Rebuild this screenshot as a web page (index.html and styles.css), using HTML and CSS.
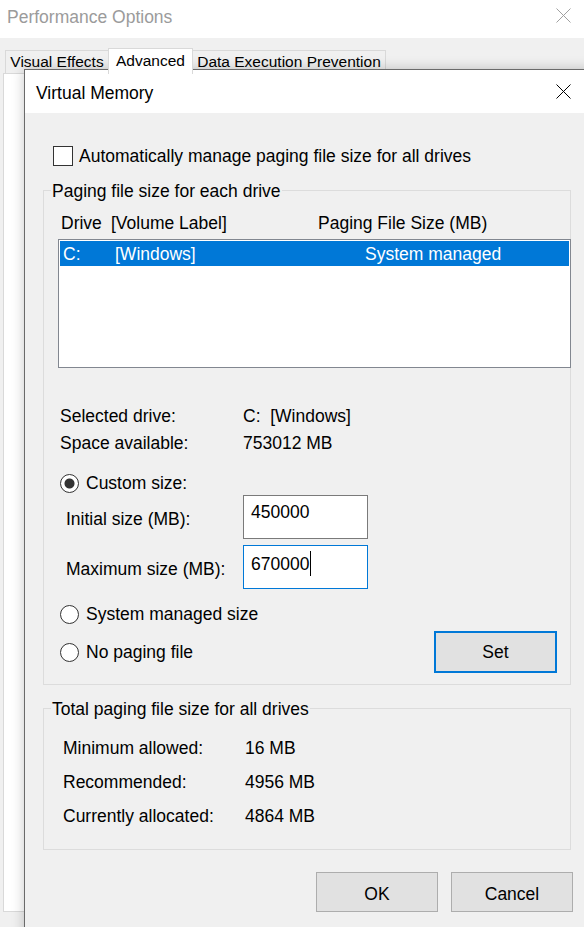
FILE: index.html
```html
<!DOCTYPE html>
<html lang="en">
<head>
<meta charset="utf-8">
<title>Virtual Memory</title>
<link rel="stylesheet" href="styles.css">
</head>
<body>
<div class="perf">
  <div class="perf-titlebar">
    <span class="perf-title">Performance Options</span>
    <svg class="close close-gray" width="15" height="15" viewBox="0 0 15 15"><path d="M0.5 0.5 L14.5 14.5 M14.5 0.5 L0.5 14.5" /></svg>
  </div>
  <div class="tabs">
    <div class="tab tab-ve">Visual Effects</div>
    <div class="tab tab-adv active">Advanced</div>
    <div class="tab tab-dep">Data Execution Prevention</div>
  </div>
  <div class="panel"></div>
</div>

<div class="dialog">
  <div class="dlg-titlebar">
    <span class="dlg-title">Virtual Memory</span>
    <svg class="close close-dark" width="15" height="15" viewBox="0 0 15 15"><path d="M0.5 0.5 L14.5 14.5 M14.5 0.5 L0.5 14.5" /></svg>
  </div>
  <div class="dlg-body">
    <div class="check-row"><span class="checkbox"></span><span>Automatically manage paging file size for all drives</span></div>

    <fieldset class="group group-drives">
      <legend>Paging file size for each drive</legend>
      <div class="list-head"><span>Drive</span><span>[Volume Label]</span><span>Paging File Size (MB)</span></div>
      <div class="listbox">
        <div class="list-row selected"><span>C:</span><span>[Windows]</span><span>System managed</span></div>
      </div>
      <div class="info">
        <span>Selected drive:</span><span>C:&nbsp; [Windows]</span>
        <span>Space available:</span><span>753012 MB</span>
      </div>
      <div class="radio-row row-custom"><span class="radio checked"></span><span>Custom size:</span></div>
      <div class="size-row row-initial"><span class="size-label">Initial size (MB):</span><div class="textbox">450000</div></div>
      <div class="size-row row-max"><span class="size-label">Maximum size (MB):</span><div class="textbox focused">670000<span class="caret"></span></div></div>
      <div class="radio-row row-system"><span class="radio"></span><span>System managed size</span></div>
      <div class="set-row">
        <div class="radio-row"><span class="radio"></span><span>No paging file</span></div>
        <button class="btn btn-set">Set</button>
      </div>
    </fieldset>

    <fieldset class="group group-total">
      <legend>Total paging file size for all drives</legend>
      <div class="totals">
        <span>Minimum allowed:</span><span>16 MB</span>
        <span>Recommended:</span><span>4956 MB</span>
        <span>Currently allocated:</span><span>4864 MB</span>
      </div>
    </fieldset>

    <div class="buttons">
      <button class="btn btn-dlg">OK</button>
      <button class="btn btn-dlg">Cancel</button>
    </div>
  </div>
</div>
</body>
</html>
```

FILE: styles.css
```css
html, body {
  margin: 0;
  padding: 0;
  width: 584px;
  height: 927px;
  overflow: hidden;
}

body {
  position: relative;
  background: #f0f0f0;
  font-family: "Liberation Sans", Arial, sans-serif;
  font-size: 17.5px;
  color: #000;
}

/* ---------- background window ---------- */
.perf-titlebar {
  height: 38px;
  background: #fff;
  display: flex;
  justify-content: space-between;
  align-items: flex-start;
}

.perf-title {
  padding-left: 7px;
  line-height: 34px;
  color: #9b9b9b;
}

.close {
  fill: none;
  stroke-width: 1;
}

.close-gray {
  stroke: #a0a0a0;
  margin-top: 8px;
  margin-right: 13px;
}

.tabs {
  display: flex;
  align-items: flex-end;
  height: 25px;
  margin-top: 10px;
  padding-left: 5px;
}

.tab {
  box-sizing: border-box;
  height: 23px;
  border: 1px solid #d9d9d9;
  border-bottom: none;
  background: #f0f0f0;
  font-size: 15.5px;
  line-height: 22px;
  text-align: center;
  white-space: nowrap;
}

.tab-ve { width: 103px; border-right: none; }
.tab-adv { width: 85px; }
.tab-dep { width: 193px; border-left: none; }

.tab.active {
  height: 26px;
  margin-bottom: -1px;
  background: #fff;
  line-height: 24px;
  position: relative;
  z-index: 1;
}

.panel {
  box-sizing: border-box;
  margin-left: 3px;
  height: 839px;
  background: #fff;
  border: 1px solid #d9d9d9;
  border-right: none;
}

/* ---------- dialog ---------- */
.dialog {
  position: absolute;
  left: 24px;
  top: 69px;
  width: 573px;
  height: 900px;
  border: 1px solid #6a6a6a;
  background: #f0f0f0;
  box-shadow: 0 0 12px rgba(0, 0, 0, 0.22);
}

.dlg-titlebar {
  box-sizing: border-box;
  height: 43px;
  padding-top: 3px;
  background: #fff;
  display: flex;
  justify-content: space-between;
  align-items: center;
}

.dlg-title {
  padding-left: 11px;
  line-height: 40px;
}

.close-dark {
  stroke: #000;
  align-self: flex-start;
  margin-top: 11px;
  margin-right: 27px;
}

.dlg-body {
  padding: 32px 27px 0 18px;
}

.check-row {
  display: flex;
  align-items: center;
  gap: 6px;
  height: 22px;
  margin-left: 10px;
}

.checkbox {
  box-sizing: border-box;
  width: 20px;
  height: 20px;
  border: 1px solid #333;
  background: #fff;
}

.group {
  margin: 12px 0 0;
  padding: 0;
  border: 1px solid #dcdcdc;
  min-width: 0;
}

.group legend {
  margin-left: 7px;
  padding: 3px 1px 0;
  line-height: 19px;
}

.group-drives {
  padding-bottom: 11px;
}

.list-head {
  display: grid;
  grid-template-columns: 50px 207px auto;
  padding-left: 17px;
  margin-top: 11px;
  line-height: 22px;
}

.listbox {
  box-sizing: border-box;
  height: 129px;
  margin: 5px -1px 0 14px;
  padding: 1px;
  border: 1px solid #828790;
  background: #fff;
}

.list-row {
  display: grid;
  grid-template-columns: 52px 250px auto;
  padding-left: 3px;
  height: 25px;
  line-height: 26px;
}

.list-row.selected {
  background: #0078d7;
  color: #fff;
}

.info {
  display: grid;
  grid-template-columns: 183px auto;
  grid-auto-rows: 27px;
  align-items: center;
  padding-left: 16px;
  margin-top: 35px;
}

.radio-row {
  display: flex;
  align-items: center;
  gap: 7px;
  height: 22px;
  padding-left: 16px;
}

.row-custom { margin-top: 15px; }
.row-system { margin-top: 14px; }

.radio {
  box-sizing: border-box;
  width: 19px;
  height: 19px;
  border: 1px solid #333;
  border-radius: 50%;
  background: #fff;
}

.radio.checked {
  background: radial-gradient(circle, #333 0, #333 4.5px, #fff 5.5px);
}

.size-row {
  display: grid;
  grid-template-columns: 177px 125px;
  align-items: center;
  height: 44px;
  padding-left: 22px;
}

.row-initial { margin-top: 1px; }
.row-max { margin-top: 6px; }

.size-label {
  margin-top: 4px;
}

.textbox {
  box-sizing: border-box;
  height: 44px;
  padding: 5px 7px;
  border: 1px solid #7a7a7a;
  background: #fff;
  line-height: 22px;
  white-space: nowrap;
}

.textbox.focused {
  border-color: #0078d7;
}

.caret {
  display: inline-block;
  width: 1px;
  height: 25px;
  margin-left: 1px;
  background: #000;
  vertical-align: -6px;
}

.set-row {
  display: flex;
  align-items: center;
  justify-content: space-between;
  height: 42px;
  margin-top: 6px;
  padding-right: 13px;
}

.btn {
  box-sizing: border-box;
  font: inherit;
  color: #000;
  background: #e1e1e1;
  border: 1px solid #adadad;
  padding: 0;
}

.btn-set {
  width: 123px;
  height: 42px;
  border: 2px solid #0078d7;
}

.group-total {
  padding-bottom: 16px;
}

.totals {
  display: grid;
  grid-template-columns: 182px auto;
  grid-auto-rows: 34px;
  align-items: center;
  padding-left: 19px;
  margin-top: 12px;
}

.buttons {
  display: flex;
  justify-content: flex-end;
  gap: 13px;
  margin-top: 22px;
  margin-right: -2px;
}

.btn-dlg {
  width: 122px;
  height: 40px;
  line-height: 42px;
}
```
